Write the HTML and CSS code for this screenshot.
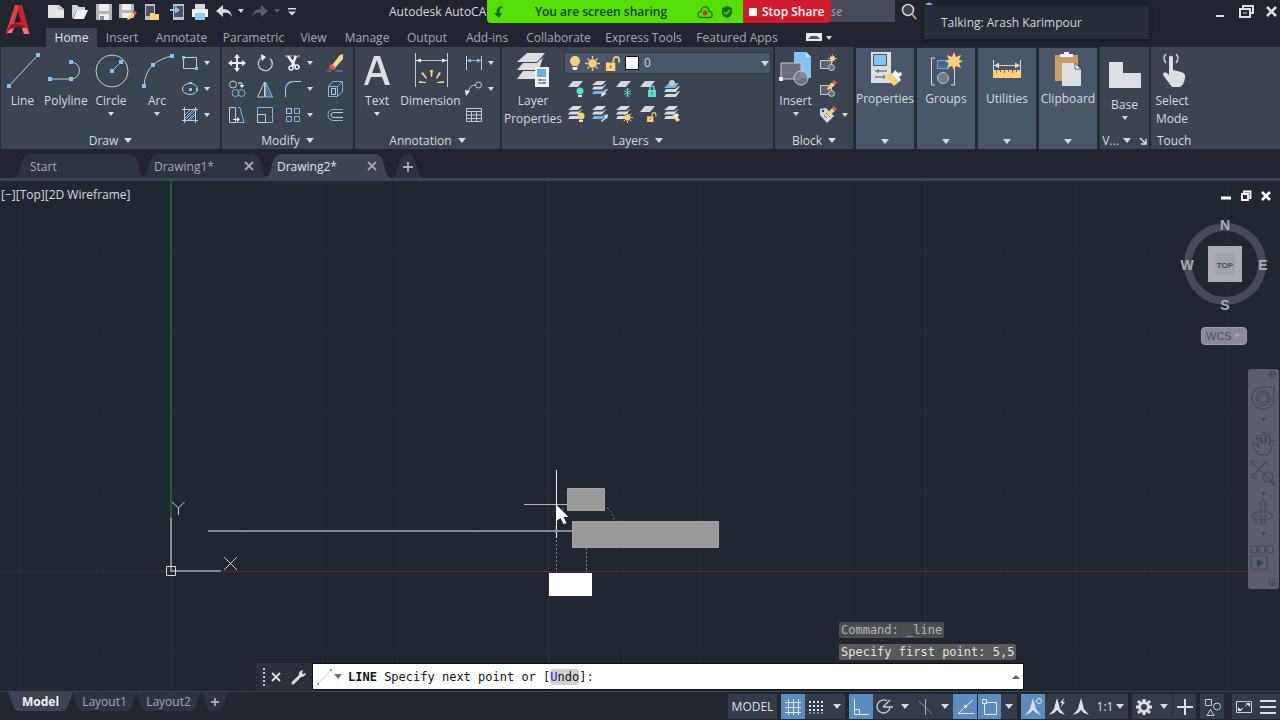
FILE: index.html
```html
<!DOCTYPE html>
<html lang="en">
<head>
<meta charset="utf-8">
<title>Autodesk AutoCAD</title>
<meta name="viewport" content="width=device-width, initial-scale=1">
<link rel="stylesheet" href="styles.css">
</head>
<body>
<svg class="defs" aria-hidden="true">
  <defs>
    <symbol id="sheet-top" viewBox="0 0 18 18"><path d="M6 1h10l-5 6H1z" fill="#d5d7da"/></symbol>
    <symbol id="sheets" viewBox="0 0 18 18">
      <path d="M6 1h9l-4 4H1z" fill="#d9dbde"/>
      <path d="M3 6.500h9l2-2h1l-4 5H1zM3 11h9l2-2h1l-4 5H1z" fill="#d9dbde"/>
    </symbol>
    <symbol id="sheets-blue" viewBox="0 0 18 18">
      <path d="M6 1h9l-4 4H1z" fill="#d9dbde"/>
      <path d="M3 6.500h9l2-2h1l-4 5H1z" fill="#d9dbde"/>
      <path d="M3 11h9l2-2h1l-4 5H1z" fill="#6fb7ea"/>
    </symbol>
    <symbol id="bulb" viewBox="0 0 10 14"><path d="M5 0a5 5 0 0 1 3 9v1H2V9a5 5 0 0 1 3-9z" fill="currentColor"/><path d="M2.500 11h5v2l-1 1h-3l-1-1z" fill="#f1f1f1"/></symbol>
    <symbol id="sun" viewBox="0 0 16 16"><circle cx="8" cy="8" r="4.500" fill="#fbd07c"/><path d="M8 0v3M8 13v3M0 8h3M13 8h3M2.500 2.500l2 2M11.500 11.500l2 2M13.500 2.500l-2 2M4.500 11.500l-2 2" stroke="#fbd07c" stroke-width="1.400"/></symbol>
    <symbol id="unlock" viewBox="0 0 16 16"><path d="M1 7h10v9H1z" fill="#fbd07c"/><path d="M9 7V4a3 3 0 0 1 6 0v3" fill="none" stroke="#fbd07c" stroke-width="1.800"/><path d="M6 10v3" stroke="#7a6440" stroke-width="1.500"/></symbol>
    <symbol id="pencil" viewBox="0 0 10 10"><path d="M1 7l4-5 3 3-5 4-3 1z" fill="#fbd07c"/><path d="M5 2l2-2 3 3-2 2z" fill="#e25563"/></symbol>
    <symbol id="compass" viewBox="0 0 20 20"><path d="M10 1l2 7 1 4 5 6-5-2-3-3-3 3-5 2 5-6 1-4z" fill="currentColor"/></symbol>
  </defs>
</svg>

<div class="app">
  <header class="titlebar">
    <svg class="logo" viewBox="0 0 26 32" aria-label="AutoCAD"><path d="M10 1h7l8 29h-6l-2-8-7-2-5 9H1z" fill="#c8232f"/><path d="M10 1h3l-1 14-7 9-4 5z" fill="#e0404b"/><path d="M13 7l3 11-7 1z" fill="#22252f"/><path d="M6 20l12 1 1 4-5-3-8 3-2 5H1z" fill="#981722"/><path d="M5 25l4-1-2 5H2zM17 24h5l2 6h-5z" fill="#e67c83"/></svg>
    <div class="quick">
      <button aria-label="New"><svg viewBox="0 0 20 20"><path d="M2 4h11l5 4v9H2z" fill="#e1e2e4"/><path d="M13 4v4h5" fill="none" stroke="#9a9ca3"/></svg></button>
      <button aria-label="Open"><svg viewBox="0 0 20 20"><path d="M2 4h5l2 2h6v3H7l-4 8H2z" fill="#d0d2d5"/><path d="M7 9h11l-4 9H3z" fill="#f0f0f1"/></svg></button>
      <button aria-label="Save"><svg viewBox="0 0 20 20"><path d="M2 3h16v16H2z" fill="#b3b5b9"/><path d="M5 3h10v7H5zM5 13h10v6H5z" fill="#eeeeef"/><path d="M6 15h4v4H6z" fill="#8a8d93"/></svg></button>
      <button aria-label="Save As"><svg viewBox="0 0 20 20"><path d="M1 3h15v14H1z" fill="#b3b5b9"/><path d="M4 3h9v6H4zM4 12h9v5H4z" fill="#eeeeef"/><use href="#pencil" x="9" y="9" width="10" height="10"/></svg></button>
      <button aria-label="Open from Web"><svg viewBox="0 0 20 20"><path d="M3 3h10v16H3z" fill="#bfc1c4"/><path d="M4 5h8v10H4z" fill="#4d525c"/><path d="M8 12h4l1 1h4v6H8z" fill="#fbd07c"/></svg></button>
      <button aria-label="Save to Web"><svg viewBox="0 0 20 20"><path d="M7 3h11v16H7z" fill="#bfc1c4"/><path d="M8 5h9v11H8z" fill="#4d525c"/><path d="M4 8h5V5l5 4-5 4v-3H4z" fill="#7fc4f4"/></svg></button>
      <button aria-label="Plot"><svg viewBox="0 0 20 20"><path d="M5 3h10v5H5z" fill="#d9dadc"/><path d="M2 8h16v8H2z" fill="#f1f1f1"/><path d="M5 12h10v7H5z" fill="#8cccf6"/></svg></button>
      <button aria-label="Undo"><svg viewBox="0 0 20 20"><path d="M2 10l7-6v4c5 0 8 2 9 8-2-4-5-5-9-4v4z" fill="#d8d9dc"/></svg></button>
      <span class="caret"></span>
      <button aria-label="Redo"><svg viewBox="0 0 20 20"><path d="M18 10l-7-6v4c-5 0-8 2-9 8 2-4 5-5 9-4v4z" fill="#5b5f69"/></svg></button>
      <span class="caret dim"></span>
      <button class="custom" aria-label="Customize"><svg viewBox="0 0 16 20"><path d="M4 7h8v1.500H4zM4 10.500h8l-4 4z" fill="#d8d9dc"/></svg></button>
    </div>
    <h1 class="apptitle">Autodesk AutoCA</h1>
    <input class="search" type="text" value="se" aria-label="Search">
    <button class="find" aria-label="Find"><svg viewBox="0 0 18 20"><circle cx="8" cy="9" r="5.500" fill="#3c414c" stroke="#d5d7da" stroke-width="1.500"/><path d="M12 13l4 5" stroke="#c99f62" stroke-width="2"/></svg></button>
    <svg class="account" viewBox="0 0 10 6" aria-hidden="true"><path d="M1 5q4-5 8 0z" fill="#7fc4f4"/></svg>
    <div class="winctl">
      <button aria-label="Minimize"><svg viewBox="0 0 16 16"><path d="M4 12h8" stroke="#dfe0e3" stroke-width="2"/></svg></button>
      <button aria-label="Restore"><svg viewBox="0 0 16 16"><path d="M5 5V2h10v7h-3M2 5h10v8H2z" fill="none" stroke="#dfe0e3" stroke-width="2"/><path d="M5 9h4" stroke="#dfe0e3"/></svg></button>
      <button aria-label="Close"><svg viewBox="0 0 16 16"><path d="M3 3l9 9M12 3l-9 9" stroke="#dfe0e3" stroke-width="2.500"/></svg></button>
    </div>
    <div class="share">
      <div class="share-info">
        <svg class="share-arrow" viewBox="0 0 12 14"><path d="M9 1C4 2 3 5 4 8H1l5 5 3-5H7c-1-3 0-5 3-6z" fill="#10691a"/></svg>
        <span class="share-text">You are screen sharing</span>
        <svg class="share-cloud" viewBox="0 0 16 14"><path d="M4 12.500a3 3 0 0 1 0-6C4 3 7 1.500 9 2s3 2 3 4c4 1 4 6 1 6.500z" fill="none" stroke="#1e7a22" stroke-width="1.300"/><circle cx="8" cy="8" r="2.500" fill="#d8341f"/></svg>
        <svg class="share-shield" viewBox="0 0 12 14"><path d="M6 1l5 2v5q-1 4-5 5-4-1-5-5V3z" fill="#16691d"/><path d="M3 7l2 2 4-4" fill="none" stroke="#57e200" stroke-width="1.500"/></svg>
      </div>
      <button class="stop"><span class="stop-box"></span>Stop Share</button>
    </div>
    <div class="talking">Talking: Arash Karimpour</div>
  </header>

  <nav class="menu">
    <button class="on">Home</button><button>Insert</button><button>Annotate</button><button>Parametric</button><button>View</button><button>Manage</button><button>Output</button><button>Add-ins</button><button>Collaborate</button><button>Express Tools</button><button>Featured Apps</button>
    <button class="ribbon-toggle" aria-label="Ribbon display"><span class="toggle-box"></span><span class="caret"></span></button>
  </nav>

  <div class="ribbon">
    <section class="panel draw">
      <div class="tools">
        <button class="tool"><svg viewBox="0 0 36 36"><path d="M4 34L33 3" stroke="#c9ccd1"/><path d="M2 32h4v4H2zM31 1h4v4h-4z" fill="#7fc4f4"/></svg>Line</button>
        <button class="tool"><svg viewBox="0 0 36 36"><path d="M3 27h21a8.500 8.500 0 0 0 0-17" fill="none" stroke="#c9ccd1"/><path d="M1 25h4v4H1zM22 25h4v4h-4zM22 8h4v4h-4z" fill="#7fc4f4"/></svg>Polyline</button>
        <button class="tool"><svg viewBox="0 0 36 36"><circle cx="19" cy="19" r="16" fill="none" stroke="#c9ccd1"/><path d="M19 19l9-9" stroke="#7fc4f4"/><path d="M17 17h4v4h-4zM26 8h4v4h-4z" fill="#7fc4f4"/></svg>Circle<span class="caret"></span></button>
        <button class="tool"><svg viewBox="0 0 36 36"><path d="M5 34Q6 20 14 13T33 4" fill="none" stroke="#c9ccd1"/><path d="M3 32h4v4H3zM12 11h4v4h-4zM31 2h4v4h-4z" fill="#7fc4f4"/></svg>Arc<span class="caret"></span></button>
        <div class="smalls">
          <div class="cell"><button aria-label="Rectangle"><svg viewBox="0 0 18 18"><path d="M2.500 3.500h13v11h-13z" fill="none" stroke="#c9ccd1"/><path d="M1 2h3v3H1zM14 13h3v3h-3z" fill="#7fc4f4"/></svg></button><span class="caret"></span></div>
          <div class="cell"><button aria-label="Ellipse"><svg viewBox="0 0 18 18"><ellipse cx="9" cy="9" rx="7.500" ry="5.500" fill="none" stroke="#c9ccd1"/><path d="M8 8h3v3H8zM15 8h2v3h-2zM8 2h3v2H8z" fill="#7fc4f4"/></svg></button><span class="caret"></span></div>
          <div class="cell"><button aria-label="Hatch"><svg viewBox="0 0 18 18"><path d="M1 3.500h16M1 14.500h16M3.500 1v16M14.500 1v16" stroke="#c9ccd1"/><path d="M4 9l5-5M4 14L14 4M9 14l5-5M4 12l8-8M7 14l7-7" stroke="#7fc4f4"/></svg></button><span class="caret"></span></div>
        </div>
      </div>
      <button class="ptitle">Draw<span class="caret big"></span></button>
    </section>

    <section class="panel modify">
      <div class="tools">
        <div class="smalls">
          <div class="cell"><button aria-label="Move"><svg viewBox="0 0 18 18"><path d="M9 1v16M1 9h16" stroke="#eef0f2" stroke-width="2"/><path d="M9 0l3 4H6zM9 18l3-4H6zM0 9l4-3v6zM18 9l-4-3v6z" fill="#eef0f2"/></svg></button></div>
          <div class="cell"><button aria-label="Copy"><svg viewBox="0 0 18 18"><circle cx="5" cy="4.500" r="3.500" fill="none" stroke="#c9ccd1"/><path d="M10 3h4v3" fill="none" stroke="#eef0f2"/><path d="M11.500 5h5L14 8z" fill="#eef0f2"/><circle cx="7.500" cy="13" r="3.500" fill="none" stroke="#7fb7e6"/><circle cx="13.500" cy="13" r="3.500" fill="none" stroke="#7fb7e6"/></svg></button></div>
          <div class="cell"><button aria-label="Stretch"><svg viewBox="0 0 18 18"><path d="M1.500 1.500h6v15h-6z" fill="none" stroke="#c9ccd1"/><path d="M10 1.500h2l4 15H8" fill="none" stroke="#7fb7e6"/><path d="M5 13h4v-2l3 2.500L9 16v-2H5z" fill="#eef0f2"/></svg></button></div>
        </div>
        <div class="smalls">
          <div class="cell"><button aria-label="Rotate"><svg viewBox="0 0 18 18"><path d="M6 3.500a7 7 0 1 0 8 1" fill="none" stroke="#c9ccd1" stroke-width="1.300"/><path d="M5 0l5 3-4 4z" fill="#eef0f2"/></svg></button></div>
          <div class="cell"><button aria-label="Mirror"><svg viewBox="0 0 18 18"><path d="M8.500 2v15h-7z" fill="none" stroke="#c9ccd1"/><path d="M9.500 2v15h7z" fill="#466f92" stroke="#7fb7e6"/></svg></button></div>
          <div class="cell"><button aria-label="Scale"><svg viewBox="0 0 18 18"><path d="M1.500 1.500h15v15h-15z" fill="none" stroke="#7fb7e6"/><path d="M1.500 8.500h8v8h-8z" fill="none" stroke="#c9ccd1"/></svg></button></div>
        </div>
        <div class="smalls">
          <div class="cell"><button aria-label="Trim"><svg viewBox="0 0 18 18"><path d="M1 2h16" stroke="#c9ccd1" stroke-dasharray="3 1"/><path d="M4 2l7 10M12 2L8 12" stroke="#eef0f2" stroke-width="2.500"/><circle cx="7" cy="14" r="2" fill="none" stroke="#eef0f2" stroke-width="1.500"/><circle cx="13" cy="13" r="2" fill="none" stroke="#eef0f2" stroke-width="1.500"/></svg></button><span class="caret"></span></div>
          <div class="cell"><button aria-label="Fillet"><svg viewBox="0 0 18 18"><path d="M10 1.500h7M1.500 10v7" stroke="#c9ccd1"/><path d="M1.500 10q0-8 8-8.500" fill="none" stroke="#7fb7e6" stroke-width="1.300"/></svg></button><span class="caret"></span></div>
          <div class="cell"><button aria-label="Array"><svg viewBox="0 0 18 18"><path d="M2.500 2.500h5v5h-5z" fill="none" stroke="#c9ccd1"/><path d="M10.500 2.500h5v5h-5zM2.500 10.500h5v5h-5zM10.500 10.500h5v5h-5z" fill="none" stroke="#7fb7e6"/></svg></button><span class="caret"></span></div>
        </div>
        <div class="smalls">
          <div class="cell"><button aria-label="Erase"><svg viewBox="0 0 18 18"><path d="M6 11L14 1l3-1v5L9 14z" fill="#fbd58b"/><path d="M6 10l4 4-2 2-5-1 1-4z" fill="#e25563"/><path d="M1 17h4M9 17h8" stroke="#5b93c6"/></svg></button></div>
          <div class="cell"><button aria-label="Explode"><svg viewBox="0 0 18 18"><path d="M2.500 6.500h9v10h-9zM2.500 6.500l4-5h10l-5 5M16.500 1.500v10l-5 5" fill="none" stroke="#7fb7e6"/><path d="M5.500 8.500h4v6h-4z" fill="none" stroke="#c9ccd1"/></svg></button></div>
          <div class="cell"><button aria-label="Offset"><svg viewBox="0 0 18 18"><path d="M17 3.500H8q-6 0-6 5.500t6 5.500h9" fill="none" stroke="#7fb7e6"/><path d="M17 6.500H8q-3 0-3 2.500t3 2.500h9" fill="none" stroke="#c9ccd1"/></svg></button></div>
        </div>
      </div>
      <button class="ptitle">Modify<span class="caret big"></span></button>
    </section>

    <section class="panel annotation">
      <div class="tools">
        <button class="tool"><svg viewBox="0 0 36 36"><path d="M15 4h6l10 29h-5l-3-8H12l-3 8H5zM18 8l-5 13h9z" fill="#dcdee1" fill-rule="evenodd"/></svg>Text<span class="caret"></span></button>
        <button class="tool"><svg viewBox="0 0 36 36"><path d="M2.500 1v34M34.500 1v34M3 8.500h31" stroke="#c9ccd1"/><path d="M3 8.500l5-2v4zM34 8.500l-5-2v4z" fill="#eef0f2"/><path d="M17 18h3l-1 7h-1zM8 21l2-1 4 6-1 1zM28 21l-2-1-3 6 1 1zM6 31v-2l7 1v1zM31 31v-2l-7 1v1z" fill="#fbd07c"/></svg>Dimension</button>
        <div class="smalls">
          <div class="cell"><button aria-label="Linear"><svg viewBox="0 0 18 18"><path d="M1.500 2v14M16.500 2v14" stroke="#c9ccd1"/><path d="M2 6.500h14" stroke="#7fb7e6"/><path d="M2 6.500l4-2v4zM16 6.500l-4-2v4z" fill="#7fc4f4"/></svg></button><span class="caret"></span></div>
          <div class="cell"><button aria-label="Leader"><svg viewBox="0 0 18 18"><circle cx="13.500" cy="5" r="3" fill="none" stroke="#c9ccd1"/><path d="M10 5Q5 5 3 12" fill="none" stroke="#c9ccd1"/><path d="M0 10l5 1-4 5z" fill="#eef0f2"/></svg></button><span class="caret"></span></div>
          <div class="cell"><button aria-label="Table"><svg viewBox="0 0 18 18"><path d="M1.500 2.500h15v13h-15zM2 5.500h14M2 9h14M2 12.500h14M6.500 6v9M11.500 6v9" fill="none" stroke="#c9ccd1"/></svg></button></div>
        </div>
      </div>
      <button class="ptitle">Annotation<span class="caret big"></span></button>
    </section>

    <section class="panel layers">
      <div class="tools">
        <button class="tool"><svg viewBox="0 0 36 36"><path d="M12 1h18l-8 9H2zM8 11h14l6-6-4 13H2zM8 19h14v8H2z" fill="#dcdee1"/><path d="M20 15h14v20H20z" fill="#f2f2f3"/><path d="M22 17h9v8h-9z" fill="#67b0e6"/><path d="M23 28h8M23 31h8M25 27v2M29 30v2" stroke="#4b505a"/></svg>Layer<br>Properties</button>
        <div class="layer-side">
          <div class="combo">
            <svg class="i-bulb" viewBox="0 0 10 14"><use href="#bulb"/></svg>
            <svg class="i-16" viewBox="0 0 16 16"><use href="#sun"/></svg>
            <svg class="i-16" viewBox="0 0 16 16"><use href="#unlock"/></svg>
            <span class="swatch"></span>
            <select aria-label="Layer"><option>0</option></select>
            <span class="caret big"></span>
          </div>
          <div class="layer-row">
            <button aria-label="Layer Off"><svg viewBox="0 0 18 18"><use href="#sheet-top" width="18" height="18"/><circle cx="13" cy="11" r="3.500" fill="#55ddd2"/><path d="M11 15h4v2h-4z" fill="#e9e9e9"/></svg></button>
            <button aria-label="Isolate"><svg viewBox="0 0 18 18"><use href="#sheets-blue" width="18" height="18"/><path d="M17 9l-3 4 1 1-5 3 1-5 1 1 4-4z" fill="#eef0f2"/></svg></button>
            <button aria-label="Freeze"><svg viewBox="0 0 18 18"><use href="#sheet-top" width="18" height="18"/><path d="M12.500 8v9M9 10.500l7 4M16 10.500l-7 4M11 8.500l1.500 1.500L14 8.500M11 16.500l1.500-1.500 1.500 1.500" fill="none" stroke="#55ddd2"/></svg></button>
            <button aria-label="Lock"><svg viewBox="0 0 18 18"><use href="#sheet-top" width="18" height="18"/><path d="M9 10h8v7H9z" fill="#55ddd2"/><path d="M11 10V8a2 2 0 0 1 4 0v2" fill="none" stroke="#55ddd2" stroke-width="1.500"/><path d="M13 12v3" stroke="#2b6f6c"/></svg></button>
            <button aria-label="Make Current"><svg viewBox="0 0 18 18"><path d="M6 3h10l-4 5H1z" fill="#6fb7ea"/><path d="M3 9h9l4-3h1l-4 6H1zM3 14h9l4-3h1l-4 6H1z" fill="#d9dbde"/><circle cx="9" cy="3" r="3" fill="#c5c8cc"/></svg></button>
          </div>
          <div class="layer-row">
            <button aria-label="Layers On"><svg viewBox="0 0 18 18"><use href="#sheets" width="18" height="18"/><circle cx="14" cy="11" r="3.500" fill="#fbd07c"/><path d="M12 15h4v2h-4z" fill="#e9e9e9"/></svg></button>
            <button aria-label="Unisolate"><svg viewBox="0 0 18 18"><use href="#sheets-blue" width="18" height="18"/><path d="M17 9l-1 5-1-1-4 4-1-1 4-4-1-1z" fill="#eef0f2"/></svg></button>
            <button aria-label="Thaw"><svg viewBox="0 0 18 18"><use href="#sheets" width="18" height="18"/><use href="#sun" x="7" y="7" width="11" height="11"/></svg></button>
            <button aria-label="Unlock"><svg viewBox="0 0 18 18"><use href="#sheet-top" width="18" height="18"/><use href="#unlock" x="7" y="7" width="11" height="10"/></svg></button>
            <button aria-label="Match"><svg viewBox="0 0 18 18"><use href="#sheets" width="18" height="18"/><path d="M9 11l3-2 5 6-3 2z" fill="#fbd58b"/><path d="M11 10l3-2 2 2-2 3z" fill="#eef0f2"/></svg></button>
          </div>
        </div>
      </div>
      <button class="ptitle">Layers<span class="caret big"></span></button>
    </section>

    <section class="panel block">
      <div class="tools">
        <button class="tool"><svg viewBox="0 0 36 36"><path d="M16 0h12l5 5v21H16z" fill="#7fc4f4"/><path d="M28 0v5h5z" fill="#c9e6fa"/><path d="M3 11h20v16H3z" fill="#6b707b" stroke="#c9ccd1"/><circle cx="23" cy="26" r="7" fill="#7b808a" fill-opacity=".8" stroke="#c9ccd1"/><path d="M1 25h4v4H1z" fill="#eef0f2"/></svg>Insert<span class="caret"></span></button>
        <div class="smalls">
          <div class="cell"><button aria-label="Create"><svg viewBox="0 0 18 18"><path d="M1.500 6.500h11v8h-11z" fill="#5f6570" stroke="#c9ccd1"/><circle cx="12.500" cy="13.500" r="3" fill="#6b707b" stroke="#c9ccd1"/><use href="#sun" x="9" y="0" width="9" height="9"/></svg></button></div>
          <div class="cell"><button aria-label="Edit"><svg viewBox="0 0 18 18"><path d="M1.500 5.500h11v9h-11z" fill="#5f6570" stroke="#c9ccd1"/><circle cx="12.500" cy="13.500" r="3" fill="#6b707b" stroke="#c9ccd1"/><use href="#pencil" x="8" y="0" width="10" height="10"/></svg></button></div>
          <div class="cell"><button aria-label="Edit Attributes"><svg viewBox="0 0 18 18"><path d="M1 3l6-1 8 8-7 7-7-8z" fill="#d5d7da"/><path d="M5 9l3 3M7 7l4 4" stroke="#5f6570"/><circle cx="4" cy="5" r="1.200" fill="#3b4450"/><use href="#pencil" x="8" y="0" width="10" height="10"/></svg></button><span class="caret"></span></div>
        </div>
      </div>
      <button class="ptitle">Block<span class="caret big"></span></button>
    </section>

    <button class="collapsed"><svg viewBox="0 0 36 36"><path d="M4 1h20v31H4z" fill="#dcdee1"/><path d="M6.500 3.500h13v11h-13z" fill="#7fc4f4" stroke="#4b505a"/><path d="M8 20h12M8 26h9M11 18v4M17 24v4" stroke="#4b505a"/><path d="M18 26l5-4 9 9-5 4z" fill="#fbd07c"/><path d="M24 23l3-2 1-2 3 3 3-1 1 3-3 2 2 3-2 2z" fill="#f4f4f4"/></svg>Properties<span class="caret big"></span></button>
    <button class="collapsed"><svg viewBox="0 0 36 36"><path d="M7 7H3.500v27H7M23 34h3.500V18" fill="none" stroke="#d5d7da"/><path d="M9.500 9.500h11v8h-11z" fill="#426a91" stroke="#65a9dd"/><circle cx="15" cy="27" r="5.500" fill="#777d88" stroke="#b9bcc2"/><path d="M26 1l2 5 5-2-2 5 4 1-4 2 2 5-5-2-2 4-2-4-5 2 2-5-4-2 4-1-2-5 5 2z" fill="#fbd07c"/></svg>Groups<span class="caret big"></span></button>
    <button class="collapsed"><svg viewBox="0 0 36 36"><path d="M4.500 9v10M31.500 9v10M5 14.500h26" stroke="#d5d7da"/><path d="M5 14.500l5-3v6zM31 14.500l-5-3v6z" fill="#d5d7da"/><path d="M4 19h28v8H4z" fill="#fbd07c"/><path d="M7.500 19v3M11.500 19v2M15.500 19v3M19.500 19v2M23.500 19v3M27.500 19v2" stroke="#806b45"/></svg>Utilities<span class="caret big"></span></button>
    <button class="collapsed"><svg viewBox="0 0 36 36"><path d="M5 4h23v26H5z" fill="#c99d69"/><path d="M10 6V3h4V1h5v2h4v3z" fill="#f4f4f4"/><path d="M12 12h13l6 6v17H12z" fill="#dcdee1"/><path d="M25 12v6h6z" fill="#fff" stroke="#555b68"/></svg>Clipboard<span class="caret big"></span></button>

    <section class="panel view">
      <div class="tools">
        <button class="tool"><svg viewBox="0 0 36 36"><path d="M2 10h14v11h18v15H2z" fill="#dcdee1"/></svg>Base<span class="caret"></span></button>
      </div>
      <button class="ptitle">V...<span class="caret big"></span><svg class="launch" viewBox="0 0 8 8"><path d="M1 1l5 5M7 2v5H2" fill="none" stroke="#dcdee1" stroke-width="1.500"/></svg></button>
    </section>
    <section class="panel touch">
      <div class="tools">
        <button class="tool"><svg viewBox="0 0 36 36"><path d="M15 5q2-3 4 0v13l8 2q5 1 4 6-1 7-5 9h-8L9 23q0-4 4-2l2 2z" fill="#dcdee1"/><path d="M12 11q-4-5 0-9M22 11q4-5 0-9" fill="none" stroke="#dcdee1" stroke-width="1.300"/></svg>Select<br>Mode</button>
      </div>
      <div class="ptitle">Touch</div>
    </section>
  </div>

  <div class="doctabs">
    <div class="doctab start"><button class="name">Start</button></div>
    <div class="doctab"><button class="name">Drawing1*</button><button class="x" aria-label="Close Drawing1"><svg viewBox="0 0 10 10"><path d="M1 1l8 8M9 1L1 9" stroke="currentColor" stroke-width="1.800"/></svg></button></div>
    <div class="doctab on"><button class="name">Drawing2*</button><button class="x" aria-label="Close Drawing2"><svg viewBox="0 0 10 10"><path d="M1 1l8 8M9 1L1 9" stroke="currentColor" stroke-width="1.800"/></svg></button></div>
    <button class="doctab plus" aria-label="New drawing"><svg viewBox="0 0 10 10"><path d="M5 0v10M0 5h10" stroke="#a9acb3" stroke-width="1.800"/></svg></button>
  </div>

  <main class="canvas">
    <svg class="scene" aria-hidden="true">
      <defs>
        <pattern id="grid" x="171" y="571" width="377" height="400" patternUnits="userSpaceOnUse">
          <path d="M75.500 0v400M151.500 0v400M226.500 0v400M302.500 0v400M0 80.500h377M0 160.500h377M0 240.500h377M0 320.500h377" stroke="#252b35"/>
          <path d="M.500 0v400M0 .500h377" stroke="#2d333d"/>
        </pattern>
      </defs>
      <g transform="translate(0 -181)">
        <rect y="181" width="100%" height="2000" fill="url(#grid)"/>
        <rect x="170" y="181" width="2" height="338" fill="#2a5a30"/>
        <rect x="222" y="571" width="100%" height="1" fill="#6a2030"/>
        <g fill="none" stroke="#a5a9b0">
          <path d="M208 531h364" stroke-width="1.500"/>
          <path d="M171 518v53h50" stroke-width="1.500"/>
          <path d="M166.500 566.500h9v9h-9z" stroke="#d8dade"/>
          <path d="M172 502l6.500 6v7M184.500 502l-6 6M224 557l13 13M237 557l-13 13" stroke="#c9ccd1"/>
        </g>
        <path d="M556.500 540v33M586.500 548v25M607 508q7 5 7 14M564 508q-8 8-8 22" fill="none" stroke="#7b8089" stroke-dasharray="2 2"/>
        <path d="M524 504.500h43" stroke="#b4b6ba"/>
        <path d="M556.500 470v68" stroke="#e9eaec"/>
        <path d="M567.500 488.500h37v22h-37zM572.500 521.500h146v26h-146z" fill="#999" stroke="#a5a5a5"/>
        <path d="M549 573h43v23h-43z" fill="#fff"/>
        <circle cx="556" cy="531" r="2" fill="#8d929a"/>
        <path d="M556.500 505v16l4-3 3 6 3-1-3-6h5z" fill="#fff"/>
      </g>
    </svg>
    <div class="viewlabel">[−][Top][2D Wireframe]</div>
    <div class="viewctl">
      <button aria-label="Minimize view"><svg viewBox="0 0 12 12"><path d="M1 8h10" stroke="#fff" stroke-width="3"/></svg></button>
      <button aria-label="Restore view"><svg viewBox="0 0 12 12"><path d="M4 3V1.500h6.500V8H9M2 4h6v6H2z" fill="none" stroke="#fff" stroke-width="1.800"/></svg></button>
      <button aria-label="Close view"><svg viewBox="0 0 12 12"><path d="M2 2l8 8M10 2l-8 8" stroke="#fff" stroke-width="2.500"/></svg></button>
    </div>
    <svg class="cube" viewBox="0 0 90 96">
      <circle cx="45" cy="47" r="37" fill="none" stroke="#464b55" stroke-width="8"/>
      <rect x="28" y="29" width="34" height="36" fill="#aaacb1"/>
      <rect x="35" y="36" width="20" height="22" fill="#9fa3ab"/>
      <g class="cube-dir"><text x="45" y="13">N</text><text x="45" y="93">S</text><text x="7" y="53">W</text><text x="83" y="53">E</text></g>
      <text class="cube-top" x="45" y="51">TOP</text>
    </svg>
    <button class="wcs">WCS<svg viewBox="0 0 8 6"><path d="M1 1h6L4 5z" fill="#a5a7b1"/></svg></button>
    <svg class="navbar" viewBox="0 0 32 220" aria-label="Navigation bar">
      <rect width="31" height="220" rx="3" fill="#5a5f69"/>
      <g fill="none" stroke="#454a54" stroke-width="1.200">
        <circle cx="24" cy="5" r="3"/><path d="M23 4l2 2M25 4l-2 2M22 214h4"/><circle cx="24" cy="213" r="3"/>
        <path d="M15 18h11v12a11 11 0 1 1-11-12z"/><circle cx="15" cy="29" r="7"/><circle cx="15" cy="29" r="4.500"/>
        <path d="M11 86l-7-11q1-3 5 1l2 2-3-11q2-2 3 0l3 8v-11q2-1 3 0v11l3-10q2 0 2 2l-1 9 3-5q2 0 2 2l-4 9-2 4z"/>
        <path d="M5 94l20 20M17 94L4 108M3 92h5M3 92v5M15 93h4v4M4 104v5h5"/><circle cx="20" cy="108" r="5"/><path d="M23 112l4 4" stroke-width="3"/>
        <path d="M13 155v-19h-2l4-5 4 5h-2v19zM7 151q-7-6 3-8h10q9 4 0 7H9M9 147l-3 4 3 3"/>
        <path d="M3 177h6v7H3zM11 177h6v7h-6zM19 177h6v7h-6zM3 187h16v13H3z"/>
      </g>
      <path d="M13 49h5l-2.500 3zM13 123h5l-2.500 3zM13 163h5l-2.500 3zM9 190l7 4-7 4z" fill="#3c414a"/>
      <path d="M0 202.500h31" stroke="#694a54"/>
    </svg>

    <div class="command">
      <div class="history"><span class="old">Command: _line</span><span>Specify first point: 5,5</span></div>
      <div class="cmdrow">
        <div class="cmdtools">
          <span class="grip"></span>
          <button aria-label="Close command line"><svg viewBox="0 0 10 10"><path d="M1 1l8 8M9 1L1 9" stroke="#dfe0e3" stroke-width="1.800"/></svg></button>
          <button aria-label="Customize command line"><svg viewBox="0 0 16 16"><path d="M2 14l8-8" stroke="#dfe0e3" stroke-width="3" stroke-linecap="round"/><path d="M12 1q-5 1-4 6l2 1q4 0 5-4l-3 1-1-1z" fill="#dfe0e3"/></svg></button>
        </div>
        <div class="cmdline">
          <svg class="cmdicon" viewBox="0 0 18 18"><path d="M2 16L15 2" stroke="#c6c8cc"/><path d="M1 15h2v2H1zM14 1h2v2h-2z" fill="#5aa5dc"/></svg>
          <span class="caret big grey"></span>
          <label for="cmd"><b>LINE</b> Specify next point or [</label><button class="undo"><span>U</span>ndo</button><label for="cmd">]:</label>
          <input id="cmd" type="text">
          <span class="caret up"></span>
        </div>
      </div>
    </div>
  </main>

  <footer class="status">
    <div class="layouts"><button class="on">Model</button><button>Layout1</button><button>Layout2</button><button class="add" aria-label="New layout"><svg viewBox="0 0 10 10"><path d="M5 1v8M1 5h8" stroke="#a9acb3" stroke-width="1.800"/></svg></button></div>
    <div class="toggles">
      <div class="grp"><button class="model">MODEL</button></div>
      <div class="grp">
        <button class="lit" aria-label="Grid"><svg viewBox="0 0 20 20"><path d="M2 5.500h16M2 10.500h16M2 15.500h16M5.500 2v16M10.500 2v16M15.500 2v16" stroke="#e6edf5"/></svg></button>
        <button aria-label="Snap"><svg viewBox="0 0 20 20"><path d="M2 5h14M2 9h14M2 13h14" stroke="#dfe0e3" stroke-width="2" stroke-dasharray="2 2"/><path d="M2 16h14" stroke="#dfe0e3" stroke-width="1" stroke-dasharray="2 2"/></svg></button>
        <button class="drop" aria-label="Snap options"><span class="caret big"></span></button>
      </div>
      <div class="grp">
        <button class="lit" aria-label="Ortho"><svg viewBox="0 0 20 20"><path d="M3.500 2v15.500H18M3.500 12.500h5v5" fill="none" stroke="#e6edf5"/></svg></button>
        <button aria-label="Polar"><svg viewBox="0 0 20 20"><path d="M15 10a6.500 6.500 0 1 1-3-6M8 10l7-7M8 10h10" fill="none" stroke="#c9ccd1" stroke-width="1.300"/></svg></button>
        <button class="drop" aria-label="Polar options"><span class="caret big"></span></button>
        <button aria-label="Isodraft"><svg viewBox="0 0 20 20"><path d="M4 4l6 6" stroke="#6aa885"/><path d="M10 10l7 7" stroke="#a86a72"/><path d="M10.500 2v16" stroke="#9bb59f"/></svg></button>
        <button class="drop" aria-label="Isodraft options"><span class="caret big"></span></button>
        <button class="lit" aria-label="Tracking"><svg viewBox="0 0 20 20"><path d="M18 3L3 16.500h16" fill="none" stroke="#e6edf5"/><path d="M9 8h3v3H9z" fill="#fff"/></svg></button>
        <button class="lit edge" aria-label="Object snap"><svg viewBox="0 0 20 20"><path d="M4.500 6v11.500h12v-12H7" fill="none" stroke="#e6edf5"/><path d="M2.500 2.500h4v4h-4z" fill="#5b8cc0" stroke="#e6edf5"/></svg></button>
        <button class="drop" aria-label="Object snap options"><span class="caret big"></span></button>
      </div>
      <div class="grp">
        <button class="lit" aria-label="Annotation visibility"><svg viewBox="0 0 20 20"><use href="#compass"/><circle cx="16" cy="4" r="2.500" fill="none" stroke="#e6edf5"/></svg></button>
        <button aria-label="Auto scale"><svg viewBox="0 0 20 20"><use href="#compass"/><path d="M17 1l-4 5h2l-1 4 4-5h-2z" fill="#dfe0e3"/></svg></button>
        <button aria-label="Annotation scale"><svg viewBox="0 0 20 20"><use href="#compass"/></svg></button>
        <button class="scale">1:1<span class="caret big"></span></button>
      </div>
      <div class="grp">
        <button aria-label="Workspace"><svg viewBox="0 0 20 20"><circle cx="10" cy="10" r="4.500" fill="none" stroke="#dfe0e3" stroke-width="3"/><path d="M10 2v3M10 15v3M2 10h3M15 10h3M4 4l2 2M14 14l2 2M16 4l-2 2M6 14l-2 2" stroke="#dfe0e3" stroke-width="3"/></svg></button>
        <button class="drop" aria-label="Workspace options"><span class="caret big"></span></button>
        <button class="edge" aria-label="Annotation monitor"><svg viewBox="0 0 20 20"><path d="M10 2v16M2 10h16" stroke="#dfe0e3" stroke-width="2"/></svg></button>
      </div>
      <div class="grp"><button aria-label="Isolate objects"><svg viewBox="0 0 20 20"><path d="M3.500 2.500h6v6h-6zM8.500 12.500l3.500 6H5z" fill="none" stroke="#c9ccd1"/><circle cx="15" cy="9.500" r="3.500" fill="none" stroke="#c9ccd1"/></svg></button></div>
      <div class="grp">
        <button aria-label="Clean screen"><svg viewBox="0 0 20 20"><path d="M2.500 4.500h15v11h-15z" fill="none" stroke="#c9ccd1"/><path d="M11 9l4-3M5 14l4-3" stroke="#dfe0e3"/><path d="M12 6h4v4zM4 10v4h4z" fill="#dfe0e3"/></svg></button>
        <button aria-label="Customization"><svg viewBox="0 0 20 20"><path d="M2 4h16M2 10h16M2 16h16" stroke="#dfe0e3" stroke-width="2"/></svg></button>
      </div>
    </div>
  </footer>
</div>
</body>
</html>
```

FILE: styles.css
```css
* { box-sizing: border-box; }

body {
  margin: 0;
  background: #22252f;
  color: #d7d9dd;
  font: 12px/18px "Open Sans", "Noto Sans", sans-serif;
}

button, input, select {
  margin: 0;
  padding: 0;
  border: 0;
  background: none;
  color: inherit;
  font: inherit;
}

svg { display: block; flex: none; }
.defs { position: absolute; width: 0; height: 0; }

.app {
  display: flex;
  flex-direction: column;
  height: 100vh;
  overflow: hidden;
}

.caret {
  flex: none;
  width: 0;
  height: 0;
  border: 3px solid transparent;
  border-top: 4px solid #d7d9dd;
  border-bottom: 0;
}
.caret.big { border-width: 5px 4px 0; }
.caret.dim { border-top-color: #5b5f69; }
.caret.grey { border-top-color: #6f7278; }
.caret.up { border: 4px solid transparent; border-top: 0; border-bottom: 4px solid #5d6066; }

/* Title bar */
.titlebar {
  position: relative;
  z-index: 2;
  display: flex;
  height: 28px;
  padding-left: 5px;
}
.logo { width: 26px; height: 32px; margin-top: 4px; }
.quick { display: flex; align-items: center; height: 22px; margin-left: 13px; }
.quick button { width: 24px; }
.quick svg { width: 20px; height: 20px; margin: 0 auto; }
.quick .caret { margin: 0 4px 0 2px; }
.quick .custom { width: 16px; }
.quick .custom svg { width: 16px; }
.apptitle { margin: 3px auto 0 89px; font-size: 12px; font-weight: 400; line-height: 18px; }
.search {
  width: 72px;
  height: 22px;
  padding-left: 8px;
  background: #454b5b;
  color: #a0a4ae;
  font-style: italic;
}
.find { width: 18px; height: 22px; margin: 0 6px 0 5px; }
.find svg { width: 18px; height: 20px; }
.account { width: 10px; height: 6px; margin-right: 278px; }
.winctl { display: flex; gap: 10px; align-items: flex-start; padding-top: 4px; }
.winctl svg { width: 16px; height: 16px; }

.share { position: absolute; top: 0; left: calc(50% - 153px); display: flex; color: #fff; font-weight: 600; }
.share-info {
  display: flex;
  align-items: center;
  width: 256px;
  height: 23px;
  padding: 0 10px 0 6px;
  border-radius: 0 0 0 4px;
  background: #55df04;
  color: #17400e;
}
.share-arrow { width: 12px; height: 14px; }
.share-text { flex: 1; text-align: center; }
.share-cloud { width: 16px; height: 14px; margin-right: 8px; }
.share-shield { width: 12px; height: 14px; }
.stop {
  display: flex;
  align-items: center;
  gap: 5px;
  width: 88px;
  height: 23px;
  padding-left: 6px;
  border-radius: 0 0 4px 0;
  background: #d01c2c;
  font-weight: 600;
  white-space: nowrap;
}
.stop-box { width: 8px; height: 8px; background: #fff; }
.talking {
  position: absolute;
  top: 6px;
  right: 131px;
  width: 225px;
  padding: 8px 17px 7px;
  background: #252e36;
  box-shadow: 0 1px 4px #12151c;
  white-space: nowrap;
}

/* Menu */
.menu {
  display: grid;
  grid-template-columns: 51px 50px 69px 75px 45px 62px 58px 62px 81px 89px 98px 46px;
  height: 19px;
  padding-left: 46px;
  color: #a6a9b1;
  white-space: nowrap;
}
.menu .on { background: #3b4450; color: #e2e4e7; }
.ribbon-toggle { display: flex; align-items: center; justify-content: flex-end; gap: 4px; }
.toggle-box { width: 16px; height: 8px; margin-bottom: 2px; background: #e9eaec; }
.toggle-box::after { content: ""; display: block; width: 6px; margin: 3px auto 0; border: 3px solid transparent; border-top: 0; border-bottom-color: #555; }

/* Ribbon */
.ribbon { display: flex; height: 102px; padding-left: 1px; background: #262b35; }
.panel {
  display: flex;
  flex: none;
  flex-direction: column;
  margin-right: 2px;
  background: #3b4450;
}
.tools { display: grid; flex: 1; align-items: start; }
.tool { padding-top: 5px; text-align: center; }
.tool svg, .collapsed svg { width: 36px; height: 36px; margin: 0 auto 4px; }
.tool .caret { display: block; margin: 2px auto 0; }
.smalls { display: grid; grid-template-rows: repeat(3, 26px); padding-top: 3px; }
.cell { display: flex; align-items: center; }
.cell button { width: 24px; }
.cell svg { width: 18px; height: 18px; margin: 0 auto; }
.cell .caret { margin-left: 2px; }
.ptitle { display: flex; align-items: center; justify-content: center; gap: 6px; height: 17px; }

.draw { width: 219px; }
.draw .tools { grid-template-columns: 43px 42px 50px 42px 34px; }
.modify { width: 131px; }
.modify .tools { grid-template-columns: 28px 28px 42px 28px; padding-left: 3px; }
.annotation { width: 145px; }
.annotation .tools { grid-template-columns: 44px 63px 34px; }
.layers { width: 271px; }
.layers .tools { grid-template-columns: 62px 1fr; padding-right: 2px; }
.block { width: 78px; margin-right: 0; }
.block .tools { grid-template-columns: 41px 34px; }
.view { width: 49px; margin-left: 3px; }
.view .tool svg { margin-bottom: 8px; }
.view .ptitle { gap: 4px; }
.launch { width: 8px; height: 8px; margin-left: 4px; }
.touch { flex: 1; margin-right: 0; }
.touch .tools { grid-template-columns: 42px; }
.touch .ptitle { justify-content: flex-start; padding-left: 6px; }

.layer-side { padding-top: 5px; }
.combo {
  display: flex;
  align-items: center;
  gap: 5px;
  height: 22px;
  margin-bottom: 2px;
  padding: 0 1px 0 5px;
  border: 1px solid #303743;
  background: #4c566b;
}
.i-bulb { width: 10px; height: 14px; color: #fbd07c; }
.i-16 { width: 15px; height: 15px; }
.swatch { width: 14px; height: 14px; border: 1px solid #111; background: #fff; }
.combo select { flex: 1; min-width: 0; appearance: none; }
.layer-row { display: flex; }
.layer-row button { width: 24px; height: 25px; }
.layer-row svg { width: 18px; height: 18px; margin: 0 auto; }

.collapsed {
  display: flex;
  flex: none;
  flex-direction: column;
  align-items: center;
  width: 58px;
  margin: 1px 0 0 3px;
  padding: 3px 0 5px;
  background: #4c566b;
}
.collapsed svg { margin-bottom: 3px; }
.collapsed .caret { margin-top: auto; }

/* Drawing tabs */
.doctabs {
  display: flex;
  align-items: flex-end;
  height: 32px;
  padding: 5px 0 0 14px;
  border-bottom: 3px solid #3b4450;
  background: #22252f;
  color: #a6a9b1;
}
.doctab {
  display: flex;
  align-items: center;
  justify-content: space-between;
  width: 126px;
  height: 24px;
  margin-right: -3px;
  padding: 2px 14px 0 12px;
  background: #2d333f;
  clip-path: polygon(0 100%, 4px 88%, 9px 16%, 14px 0, calc(100% - 14px) 0, calc(100% - 9px) 16%, calc(100% - 4px) 88%, 100% 100%);
}
.doctab.start { width: 131px; padding-left: 16px; }
.doctab.on { background: #3b4450; color: #e2e4e7; }
.doctab .x { margin-top: -2px; color: #a6a9b1; }
.doctab .x svg { width: 10px; height: 10px; }
.doctab.plus { width: 31px; margin-left: 4px; padding: 2px 0 0; justify-content: center; }
.plus svg { width: 10px; height: 10px; }

/* Drawing area */
.canvas { position: relative; flex: 1; min-height: 0; background: #212730; }
.scene { position: absolute; inset: 0; width: 100%; height: 100%; }
.viewlabel { position: absolute; top: 5px; left: 1px; }
.viewctl { position: absolute; top: 9px; right: 8px; display: flex; gap: 8px; }
.viewctl svg { width: 12px; height: 12px; }
.cube { position: absolute; top: 36px; right: 10px; width: 90px; height: 96px; }
.cube text { text-anchor: middle; font-family: "Liberation Sans", sans-serif; font-weight: 700; }
.cube-dir { fill: #a9acb2; font-size: 14px; }
.cube .cube-top { fill: #474c56; font-size: 8px; }
.wcs {
  position: absolute;
  top: 146px;
  right: 33px;
  display: flex;
  align-items: center;
  justify-content: space-between;
  width: 46px;
  height: 18px;
  padding: 0 5px 0 4px;
  border: 1px solid #9c9eaa;
  border-radius: 4px;
  background: #888a96;
  color: #4d505b;
  font: 11px/16px "Liberation Sans", sans-serif;
}
.wcs svg { width: 8px; height: 6px; }
.navbar { position: absolute; top: 188px; right: 0; width: 32px; height: 220px; }

.command {
  position: absolute;
  right: 20%;
  bottom: 1px;
  left: 20%;
  color: #e4e4e4;
  font: 12px/16px "DejaVu Sans Mono", monospace;
}
.history { display: flex; flex-direction: column; align-items: flex-start; gap: 6px; width: 185px; margin: 0 0 3px auto; }
.history span { padding: 0 2px; border-radius: 2px; background: #595959; white-space: nowrap; }
.history .old { background: #4b4e52; color: #b9b9b9; }
.cmdrow { display: flex; height: 27px; }
.cmdtools { display: flex; align-items: center; gap: 10px; width: 56px; padding-left: 7px; background: #2b303b; }
.cmdtools button:first-of-type svg { width: 10px; height: 10px; }
.cmdtools button + button svg { width: 16px; height: 16px; }
.grip { width: 0; height: 18px; margin-right: -4px; border-left: 2px dotted #c9ccd1; }
.cmdline {
  display: flex;
  flex: 1;
  align-items: center;
  min-width: 0;
  padding: 0 3px;
  border: 1px solid #111;
  background: #fff;
  color: #111;
  white-space: pre;
}
.cmdicon { width: 18px; height: 18px; }
.cmdline .grey { margin: 0 6px 0 0; }
.undo { border-radius: 3px; background: #d0d0d2; }
.undo span { color: #2a22c9; }
#cmd { flex: 1; min-width: 0; outline: 0; }

/* Status bar */
.status {
  display: flex;
  flex: none;
  justify-content: space-between;
  height: 29px;
  border-top: 1px solid #3b4450;
  background: #22262f;
}
.layouts { display: flex; padding-left: 8px; color: #a6a9b1; }
.layouts button {
  width: 65px;
  height: 19px;
  margin-right: -1px;
  background: #2d333f;
  clip-path: polygon(0 0, 100% 0, calc(100% - 6px) 85%, calc(100% - 9px) 100%, 9px 100%, 6px 85%);
}
.layouts .on { background: #3b4450; color: #f2f3f5; font-weight: 700; }
.layouts .add { width: 26px; margin-left: 2px; }
.add svg { width: 10px; height: 10px; margin: 0 auto; }
.toggles { display: flex; gap: 4px; padding-top: 2px; }
.grp { display: flex; height: 25px; background: #343c49; }
.grp:last-child { margin-left: 4px; }
.grp button { display: flex; align-items: center; justify-content: center; width: 24px; color: #dfe0e3; }
.grp svg { width: 20px; height: 20px; }
.grp .lit { background: #5b8cc0; }
.grp .edge { border-left: 1px solid #262b35; }
.grp .drop { width: 16px; }
.grp .model { width: 49px; }
.grp .scale { width: 35px; gap: 3px; }
```
